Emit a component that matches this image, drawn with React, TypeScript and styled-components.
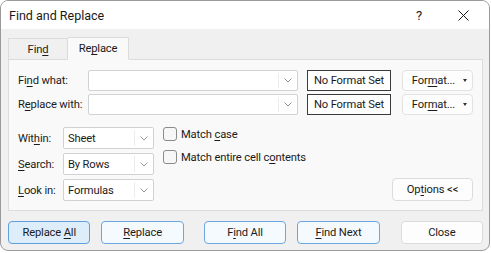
import React from "react";
import styled, { createGlobalStyle } from "styled-components";

const Global = createGlobalStyle`
  html, body { margin: 0; padding: 0; background: #ffffff; }
  body { font-family: Roboto, "Noto Sans", sans-serif; font-size: 11.2px; letter-spacing: -0.15px; color: #1b1b1b; }
  * { box-sizing: border-box; }
`;

const Window = styled.div`
  width: 490px;
  height: 251px;
  border: 1px solid #9a9a9a;
  border-radius: 8px;
  overflow: hidden;
  background: #f0f0f0;
  display: flex;
  flex-direction: column;
`;

const TitleBar = styled.div`
  height: 28px;
  background: #ffffff;
  display: flex;
  align-items: center;
  padding-left: 8px;
  flex-shrink: 0;
`;

const Title = styled.div`
  flex: 1;
  font-size: 12.5px;
  letter-spacing: 0;
  color: #1a1a1a;
`;

const TitleButton = styled.div<{ $w: number }>`
  width: ${(p) => p.$w}px;
  height: 28px;
  display: flex;
  align-items: center;
  justify-content: center;
  color: #1a1a1a;
  font-size: 13px;
`;

const Body = styled.div`
  padding: 8px 6px 0 7px;
  display: flex;
  flex-direction: column;
`;

const TabStrip = styled.div`
  display: flex;
  align-items: flex-end;
  height: 23px;
  position: relative;
  z-index: 1;
  margin-bottom: -1px;
`;

const Tab = styled.div<{ $active?: boolean; $w: number }>`
  width: ${(p) => p.$w}px;
  height: ${(p) => (p.$active ? 23 : 22)}px;
  background: ${(p) => (p.$active ? "#f9f9f9" : "#f0f0f0")};
  border: 1px solid #dcdcdc;
  border-bottom: ${(p) => (p.$active ? "1px solid #f9f9f9" : "1px solid #dcdcdc")};
  border-left: ${(p) => (p.$active ? "none" : "1px solid #dcdcdc")};
  display: flex;
  align-items: center;
  justify-content: center;
  padding-top: ${(p) => (p.$active ? 0 : 1)}px;
`;

const Panel = styled.div`
  height: 152px;
  background: #f9f9f9;
  border: 1px solid #dcdcdc;
  padding: 10px 9px 10px 9px;
  display: flex;
  flex-direction: column;
`;

const TopRows = styled.div`
  display: flex;
  flex-direction: column;
  gap: 3px;
`;

const TopRow = styled.div`
  display: flex;
  align-items: center;
`;

const Label = styled.div<{ $w?: number }>`
  ${(p) => (p.$w ? `width: ${p.$w}px;` : "")}
  white-space: nowrap;
  flex-shrink: 0;
`;

const Combo = styled.div<{ $w: number; $h?: number }>`
  width: ${(p) => p.$w}px;
  height: ${(p) => p.$h ?? 21}px;
  flex-shrink: 0;
  background: #ffffff;
  border: 1px solid #d2d2d2;
  border-radius: 2px;
  display: flex;
  align-items: center;
`;

const ComboText = styled.div`
  flex: 1;
  padding-left: 4px;
`;

const ComboSep = styled.div`
  width: 1px;
  align-self: stretch;
  margin: 2px 0;
  background: #ececec;
`;

const ComboArrow = styled.div`
  width: 18px;
  display: flex;
  align-items: center;
  justify-content: center;
`;

const FormatBox = styled.div`
  margin-left: 9px;
  width: 84px;
  height: 21px;
  flex-shrink: 0;
  border: 1px solid #3a3a3a;
  background: #ffffff;
  display: flex;
  align-items: center;
  justify-content: center;
`;

const FormatButton = styled.div`
  margin-left: 11px;
  width: 71px;
  height: 21px;
  flex-shrink: 0;
  background: #fdfdfd;
  border: 1px solid #e2e2e2;
  border-radius: 4px;
  display: flex;
  align-items: center;
  justify-content: center;
  position: relative;
  padding-right: 8px;
`;

const Caret = styled.span`
  position: absolute;
  right: 5px;
  top: 8px;
  width: 0;
  height: 0;
  border-left: 2px solid transparent;
  border-right: 2px solid transparent;
  border-top: 3px solid #333;
`;

const Lower = styled.div`
  margin-top: 12px;
  display: flex;
  flex: 1;
`;

const SelectCol = styled.div`
  display: flex;
  flex-direction: column;
  gap: 4px;
`;

const SelectRow = styled.div`
  display: flex;
  align-items: center;
`;

const Checks = styled.div`
  margin-left: 9px;
  display: flex;
  flex-direction: column;
  gap: 9px;
  flex: 1;
`;

const CheckRow = styled.div`
  display: flex;
  align-items: center;
  gap: 4px;
  height: 14px;
`;

const Box = styled.div`
  width: 14px;
  height: 14px;
  border: 1px solid #8b8b8b;
  border-radius: 3px;
  background: #f7f7f7;
`;

const RightCol = styled.div`
  display: flex;
  flex-direction: column;
  justify-content: flex-end;
`;

const PlainButton = styled.div<{ $w: number }>`
  width: ${(p) => p.$w}px;
  height: 23px;
  background: #fdfdfd;
  border: 1px solid #dcdcdc;
  border-radius: 4px;
  display: flex;
  align-items: center;
  justify-content: center;
`;

const ButtonRow = styled.div`
  display: flex;
  margin-top: 10px;
`;

const ActionButton = styled.div<{ $kind: "primary" | "blue" | "plain"; $ml: number }>`
  width: 83px;
  height: 23px;
  margin-left: ${(p) => p.$ml}px;
  border-radius: 4px;
  display: flex;
  align-items: center;
  justify-content: center;
  background: ${(p) =>
    p.$kind === "primary" ? "#deedfa" : p.$kind === "blue" ? "#f5faff" : "#fdfdfd"};
  border: 1px solid
    ${(p) => (p.$kind === "primary" ? "#5e9fdc" : p.$kind === "blue" ? "#6aa7e0" : "#dcdcdc")};
`;

const U = styled.span`
  text-decoration: underline;
  text-underline-offset: 2px;
`;

const Chevron = () => (
  <svg width="8" height="5" viewBox="0 0 8 5">
    <path d="M0.5 0.5 L4 4 L7.5 0.5" fill="none" stroke="#8a8a8a" strokeWidth="0.9" />
  </svg>
);

const ComboField = ({ text, w, h }: { text?: string; w: number; h?: number }) => (
  <Combo $w={w} $h={h}>
    <ComboText>{text}</ComboText>
    <ComboSep />
    <ComboArrow>
      <Chevron />
    </ComboArrow>
  </Combo>
);

const FormatControls = () => (
  <>
    <FormatBox>
      <span>No Format Set</span>
    </FormatBox>
    <FormatButton>
      <span>
        For<U>m</U>at...
      </span>
      <Caret />
    </FormatButton>
  </>
);

export default function App() {
  return (
    <>
      <Global />
      <Window>
        <TitleBar>
          <Title>Find and Replace</Title>
          <TitleButton $w={24}>?</TitleButton>
          <TitleButton $w={14} />
          <TitleButton $w={36}>
            <svg width="11" height="11" viewBox="0 0 11 11">
              <path d="M0.5 0.5 L10.5 10.5 M10.5 0.5 L0.5 10.5" stroke="#1a1a1a" strokeWidth="1" />
            </svg>
          </TitleButton>
          <TitleButton $w={8} />
        </TitleBar>
        <Body>
          <TabStrip>
            <Tab $w={60}>
              <span>
                Fin<U>d</U>
              </span>
            </Tab>
            <Tab $w={61} $active>
              <span>
                Re<U>p</U>lace
              </span>
            </Tab>
          </TabStrip>
          <Panel>
            <TopRows>
              <TopRow>
                <Label $w={70}>
                  Fi<U>n</U>d what:
                </Label>
                <ComboField w={210} />
                <FormatControls />
              </TopRow>
              <TopRow>
                <Label $w={70}>
                  R<U>e</U>place with:
                </Label>
                <ComboField w={210} />
                <FormatControls />
              </TopRow>
            </TopRows>
            <Lower>
              <SelectCol>
                <SelectRow>
                  <Label $w={45}>
                    Wit<U>h</U>in:
                  </Label>
                  <ComboField text="Sheet" w={91} h={22} />
                </SelectRow>
                <SelectRow>
                  <Label $w={45}>
                    <U>S</U>earch:
                  </Label>
                  <ComboField text="By Rows" w={91} h={22} />
                </SelectRow>
                <SelectRow>
                  <Label $w={45}>
                    <U>L</U>ook in:
                  </Label>
                  <ComboField text="Formulas" w={91} h={22} />
                </SelectRow>
              </SelectCol>
              <Checks>
                <CheckRow>
                  <Box />
                  <span>
                    Match <U>c</U>ase
                  </span>
                </CheckRow>
                <CheckRow>
                  <Box />
                  <span>
                    Match entire cell c<U>o</U>ntents
                  </span>
                </CheckRow>
              </Checks>
              <RightCol>
                <PlainButton $w={81}>
                  <span>
                    Op<U>t</U>ions &lt;&lt;
                  </span>
                </PlainButton>
              </RightCol>
            </Lower>
          </Panel>
          <ButtonRow>
            <ActionButton $kind="primary" $ml={0}>
              <span>
                Replace <U>A</U>ll
              </span>
            </ActionButton>
            <ActionButton $kind="blue" $ml={11}>
              <span>
                <U>R</U>eplace
              </span>
            </ActionButton>
            <ActionButton $kind="blue" $ml={20}>
              <span>
                F<U>i</U>nd All
              </span>
            </ActionButton>
            <ActionButton $kind="blue" $ml={11}>
              <span>
                <U>F</U>ind Next
              </span>
            </ActionButton>
            <ActionButton $kind="plain" $ml={21}>
              <span>Close</span>
            </ActionButton>
          </ButtonRow>
        </Body>
      </Window>
    </>
  );
}
